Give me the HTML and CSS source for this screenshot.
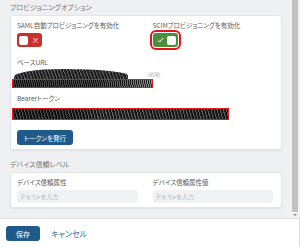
FILE: index.html
```html
<!DOCTYPE html>
<html>
<head>
  <meta charset="UTF-8">
  <link rel="stylesheet" href="styles.css">
</head>
<body>
  <div class="main">
    <div class="scroll-content">
      <div class="section-title">プロビジョニングオプション</div>
      <div class="card card-provision">
        <div class="grid">
          <div class="field">
            <div class="label">SAML自動プロビジョニングを有効化</div>
            <div class="toggle toggle-off">
              <span class="knob"></span>
              <span class="toggle-x">×</span>
            </div>
          </div>
          <div class="field">
            <div class="label">SCIMプロビジョニングを有効化</div>
            <div class="toggle toggle-on marked">
              <svg class="check" width="7" height="6" viewBox="0 0 7 6"><path d="M0.8 3.2 L2.7 5 L6.2 1" fill="none" stroke="#fff" stroke-width="1"/></svg>
              <span class="knob"></span>
            </div>
          </div>
        </div>
        <div class="label label-url">ベースURL</div>
        <div class="url-row">
          <div class="scribble scribble-top"></div>
          <span class="hint">(必須)</span>
        </div>
        <div class="redact redact-url"></div>
        <div class="label label-token">Bearerトークン</div>
        <div class="redact redact-token"></div>
        <button class="btn btn-issue">トークンを発行</button>
      </div>

      <div class="section-title section-device">デバイス信頼レベル</div>
      <div class="card card-device">
        <div class="grid">
          <div class="field">
            <div class="label">デバイス信頼属性</div>
            <input class="text-input" type="text" placeholder="テキストを入力">
          </div>
          <div class="field">
            <div class="label">デバイス信頼属性値</div>
            <input class="text-input" type="text" placeholder="テキストを入力">
          </div>
        </div>
      </div>
    </div>
    <div class="scrollbar">
      <div class="thumb"></div>
      <div class="arrow"></div>
    </div>
  </div>
  <div class="footer">
    <button class="btn btn-save">保存</button>
    <span class="cancel">キャンセル</span>
  </div>
</body>
</html>
```

FILE: styles.css
```css
body {
  margin: 0;
  width: 300px;
  height: 247px;
  display: flex;
  flex-direction: column;
  font-family: "Noto Sans CJK JP", "Noto Sans", sans-serif;
  font-feature-settings: "palt";
  color: #555;
  overflow: hidden;
}
.main {
  height: 219px;
  flex-shrink: 0;
  display: flex;
  background: #eff0f2;
  border-bottom: 1px solid #dedfe2;
  box-sizing: border-box;
}
.scroll-content {
  flex: 1;
  padding-left: 10px;
  padding-right: 10px;
  overflow: hidden;
}
.section-title {
  font-size: 7px;
  line-height: 10px;
  color: #777;
  padding-top: 2px;
  height: 13px;
}
.section-device {
  padding-top: 9px;
  height: 13px;
}
.card {
  background: #fff;
  border: 1px solid #e3e4e7;
  border-radius: 3px;
  box-shadow: 0 1px 2px rgba(0, 0, 0, 0.06);
  padding: 4px 8px 0 6px;
  box-sizing: border-box;
}
.card-provision {
  height: 135px;
}
.card-device {
  height: 36px;
}
.grid {
  display: grid;
  grid-template-columns: 1fr 1fr;
  column-gap: 15px;
}
.label {
  font-size: 6.5px;
  line-height: 10px;
  color: #5a5a5a;
}
.toggle {
  width: 25px;
  height: 14px;
  margin-top: 3px;
  border-radius: 3px;
  display: flex;
  align-items: center;
  justify-content: space-between;
  padding: 0 2px;
  box-sizing: border-box;
}
.toggle-off {
  background: #c8302b;
}
.toggle-on {
  background: #4b8f3d;
  padding-left: 4px;
}
.marked {
  outline: 2px solid #e3141b;
  outline-offset: 1px;
}
.knob {
  width: 9px;
  height: 9px;
  background: #fff;
  border-radius: 2px;
}
.toggle-x {
  color: #fff;
  font-size: 8px;
  line-height: 8px;
  width: 9px;
  text-align: center;
}
.label-url {
  margin-top: 10px;
}
.url-row {
  display: flex;
  align-items: flex-end;
  height: 12px;
}
.scribble {
  background:
    repeating-linear-gradient(70deg, rgba(20, 20, 20, 0.9) 0 1px, rgba(120, 120, 120, 0.6) 1px 2px, rgba(40, 40, 40, 0.95) 2px 3px),
    repeating-linear-gradient(-20deg, #222 0 2px, #555 2px 3px);
}
.scribble-top {
  width: 114px;
  height: 10px;
  margin-left: -3px;
  border-radius: 45% 60% 8% 4% / 80% 70% 0 0;
}
.hint {
  font-size: 5px;
  line-height: 6px;
  color: #aaa;
  margin-left: 19px;
  margin-bottom: 2px;
}
.redact {
  margin-left: -5px;
  border: 1.5px solid #e11a1f;
  box-sizing: border-box;
}
.redact-url {
  width: 141px;
  height: 9px;
  background:
    repeating-linear-gradient(80deg, rgba(10, 10, 10, 0.85) 0 1px, rgba(110, 110, 110, 0.5) 1px 2px),
    linear-gradient(90deg, #1a1a1a 0%, #2a2a2a 60%, #777 85%, #bbb 100%);
}
.label-token {
  margin-top: 5px;
}
.redact-token {
  width: 217px;
  height: 12px;
  margin-top: 5px;
  background:
    repeating-linear-gradient(75deg, rgba(0, 0, 0, 0.7) 0 1px, rgba(150, 150, 150, 0.45) 1px 2px, rgba(30, 30, 30, 0.8) 2px 3px),
    linear-gradient(90deg, #111 0%, #111 28%, #3a3a3a 40%, #2a2a2a 100%);
}
.btn {
  display: block;
  border: none;
  border-radius: 3px;
  background: #1f5b8a;
  color: #fff;
  font-family: inherit;
  font-feature-settings: "palt";
  padding: 0;
}
.btn-issue {
  width: 56px;
  height: 15px;
  margin-top: 10px;
  font-size: 6.5px;
}
.text-input {
  display: block;
  width: 100%;
  height: 13px;
  margin: 3px 0 0;
  border: none;
  border-radius: 4px;
  background: #f0f1f3;
  padding: 0 3px;
  box-sizing: border-box;
  font-family: inherit;
  font-feature-settings: "palt";
  font-size: 6px;
  outline: none;
}
.text-input::placeholder {
  color: #b5b7bb;
}
.scrollbar {
  width: 8px;
  background: #f1f1f1;
  display: flex;
  flex-direction: column;
  align-items: flex-start;
}
.thumb {
  width: 6px;
  height: 212px;
  background: #c1c1c1;
}
.arrow {
  margin: 2px 0 0 1px;
  width: 0;
  height: 0;
  border-left: 2px solid transparent;
  border-right: 2px solid transparent;
  border-top: 2px solid #888;
}
.footer {
  flex: 1;
  background: #fff;
  display: flex;
  align-items: center;
  padding-left: 6px;
  padding-top: 1px;
  border-right: 1px solid #ddd;
}
.btn-save {
  width: 34px;
  height: 15px;
  font-size: 7px;
}
.cancel {
  margin-left: 11px;
  font-size: 8px;
  color: #2e6ea6;
}
```
